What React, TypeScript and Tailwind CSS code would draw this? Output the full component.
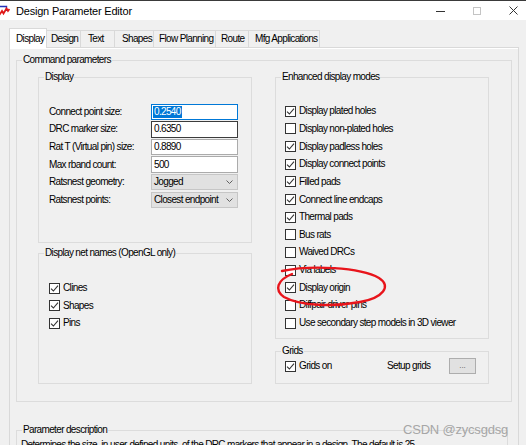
import type { ReactNode } from "react";

const ui =
  "font-['Liberation_Sans',Arial,sans-serif] text-[10px] tracking-[-0.65px] leading-[12px] text-black";

function GroupBox({
  label,
  className,
  children,
}: {
  label: string;
  className?: string;
  children?: ReactNode;
}) {
  return (
    <fieldset className={`border border-[#dcdcdc] ${className ?? ""}`}>
      <legend className="ml-[5px] px-[1px] leading-[12px]">{label}</legend>
      {children}
    </fieldset>
  );
}

function Check({ on }: { on?: boolean }) {
  return (
    <span className="flex h-[11px] w-[11px] shrink-0 items-center justify-center border border-[#333333] bg-white">
      {on && (
        <svg width="9" height="9" viewBox="0 0 9 9" fill="none">
          <path d="M1 4.6L3.4 7L8 1.6" stroke="#333333" strokeWidth="1.1" />
        </svg>
      )}
    </span>
  );
}

function CheckRow({ label, on, h = "h-[17.5px]" }: { label: string; on?: boolean; h?: string }) {
  return (
    <div className={`flex items-center gap-[3px] whitespace-nowrap ${h}`}>
      <Check on={on} />
      <span>{label}</span>
    </div>
  );
}

function Chevron() {
  return (
    <svg width="7" height="4" viewBox="0 0 7 4" fill="none">
      <path d="M0.5 0.5L3.5 3.5L6.5 0.5" stroke="#606060" strokeWidth="1" />
    </svg>
  );
}

const fields = [
  { label: "Connect point size:", value: "0.2540", kind: "focus" },
  { label: "DRC marker size:", value: "0.6350", kind: "hover" },
  { label: "Rat T (Virtual pin) size:", value: "0.8890", kind: "edit" },
  { label: "Max rband count:", value: "500", kind: "edit" },
  { label: "Ratsnest geometry:", value: "Jogged", kind: "combo" },
  { label: "Ratsnest points:", value: "Closest endpoint", kind: "combo" },
];

const modes: [string, boolean][] = [
  ["Display plated holes", true],
  ["Display non-plated holes", false],
  ["Display padless holes", true],
  ["Display connect points", true],
  ["Filled pads", true],
  ["Connect line endcaps", true],
  ["Thermal pads", true],
  ["Bus rats", false],
  ["Waived DRCs", false],
  ["Via labels", false],
  ["Display origin", true],
  ["Diffpair driver pins", false],
  ["Use secondary step models in 3D viewer", false],
];

function Field({ value, kind }: { value: string; kind: string }) {
  if (kind === "combo") {
    return (
      <div className="flex h-[16.5px] w-[87px] items-center justify-between border border-[#c6c6c6] bg-[#e1e1e1] pl-[2px] pr-[4px]">
        <span className="whitespace-nowrap">{value}</span>
        <Chevron />
      </div>
    );
  }
  const border =
    kind === "focus" ? "border-[#0078d7]" : kind === "hover" ? "border-[#3c3c3c]" : "border-[#ababab]";
  return (
    <div className={`flex h-[16.5px] w-[87px] items-center border bg-white pl-[1px] ${border}`}>
      {kind === "focus" ? (
        <span className="bg-[#0078d7] pl-[1px] pr-[1px] text-white">{value}</span>
      ) : (
        <span className="pl-[1px]">{value}</span>
      )}
    </div>
  );
}

function TitleBar() {
  return (
    <div className="flex h-[20px] items-center border-t border-[#3a3a3a] bg-white">
      <svg className="-ml-[2px] shrink-0" width="12" height="12" viewBox="0 0 12 12" fill="none">
        <path d="M0.5 1.5H8.5V6" stroke="#2233bb" strokeWidth="1.4" />
        <path d="M0.5 1.5V9" stroke="#2233bb" strokeWidth="1.4" />
        <path d="M1 10.5L4 6L5.5 8.5L8.5 3.5L10 6L11.5 4" stroke="#e01818" strokeWidth="1.8" />
      </svg>
      <span className="ml-[6px] text-[11px] tracking-[-0.2px] text-black">Design Parameter Editor</span>
      <div className="ml-auto flex items-center gap-[28px] pr-[8px]">
        <svg width="9" height="9" viewBox="0 0 9 9" fill="none">
          <path d="M0 5.5H9" stroke="#333333" strokeWidth="1" />
        </svg>
        <svg width="8" height="8" viewBox="0 0 8 8" fill="none">
          <rect x="0.5" y="0.5" width="7" height="7" stroke="#c4c4c4" strokeWidth="1" />
        </svg>
        <svg width="9" height="9" viewBox="0 0 9 9" fill="none">
          <path d="M0.5 0.5L8.5 8.5M8.5 0.5L0.5 8.5" stroke="#333333" strokeWidth="1" />
        </svg>
      </div>
    </div>
  );
}

const tabs = [
  { label: "Design", w: "w-[34px]", pl: "pl-[4px]" },
  { label: "Text", w: "w-[34px]", pl: "pl-[7px]" },
  { label: "Shapes", w: "w-[39px]", pl: "pl-[7px]" },
  { label: "Flow Planning", w: "w-[62px]", pl: "pl-[5px]" },
  { label: "Route", w: "w-[33px]", pl: "pl-[5px]" },
  { label: "Mfg Applications", w: "w-[71px]", pl: "pl-[6px]" },
];

function Tabs() {
  return (
    <div className="flex h-[27px] items-end pl-[9px]">
      <div className="relative z-10 -mb-px flex h-[20px] w-[38px] items-start border border-b-0 border-[#d9d9d9] bg-white pl-[6px] pt-[4px]">
        Display
      </div>
      {tabs.map((t) => (
        <div
          key={t.label}
          className={`flex h-[17px] items-center whitespace-nowrap border-t border-r border-[#d9d9d9] ${t.w} ${t.pl}`}
        >
          {t.label}
        </div>
      ))}
    </div>
  );
}

export default function App() {
  return (
    <div className={`relative h-[445px] w-[526px] overflow-hidden bg-[#f0f0f0] ${ui}`}>
      <TitleBar />
      <Tabs />
      <div className="ml-[9px] h-[400px] w-[510px] border border-[#d9d9d9] shadow-[inset_0_1px_0_#ffffff]">
        <GroupBox label="Command parameters" className="ml-[6px] mt-[6px] h-[348px] w-[496px]">
          <div className="ml-[21px] mt-[5px] flex gap-[23px]">
            <div className="flex w-[214px] flex-col gap-[4px]">
              <GroupBox label="Display" className="h-[172px] w-[214px]">
                <div className="flex flex-col pl-[10px] pt-[20px]">
                  {fields.map((f) => (
                    <div key={f.label} className="flex h-[17.6px] items-center">
                      <span className="w-[102px] whitespace-nowrap">{f.label}</span>
                      <Field value={f.value} kind={f.kind} />
                    </div>
                  ))}
                </div>
              </GroupBox>
              <GroupBox label="Display net names (OpenGL only)" className="h-[137px] w-[214px]">
                <div className="flex flex-col pl-[10px] pt-[20.5px]">
                  <CheckRow label="Clines" on />
                  <CheckRow label="Shapes" on />
                  <CheckRow label="Pins" on />
                </div>
              </GroupBox>
            </div>
            <div className="flex w-[214px] flex-col gap-[6px]">
              <GroupBox label="Enhanced display modes" className="h-[268px] w-[214px]">
                <div className="flex flex-col pl-[9px] pt-[19.5px]">
                  {modes.map(([label, on]) => (
                    <CheckRow key={label} label={label} on={on} h="h-[17.65px]" />
                  ))}
                </div>
              </GroupBox>
              <GroupBox label="Grids" className="h-[39px] w-[214px]">
                <div className="flex h-[17.5px] items-center pl-[9px] pt-[1px]">
                  <div className="w-[102px]">
                    <CheckRow label="Grids on" on />
                  </div>
                  <span className="w-[62px] whitespace-nowrap">Setup grids</span>
                  <div className="flex h-[16px] w-[27px] items-center justify-center border border-[#adadad] bg-[#e1e1e1] text-[8px] tracking-[0px] text-[#555555]">
                    ...
                  </div>
                </div>
              </GroupBox>
            </div>
          </div>
        </GroupBox>
        <GroupBox label="Parameter description" className="ml-[6px] mt-[22px] h-[60px] w-[492px]">
          <p className="ml-[4px] mt-[2.5px] whitespace-nowrap">
            Determines the size, in user-defined units, of the DRC markers that appear in a design. The default is 25.
          </p>
        </GroupBox>
      </div>

      <svg
        className="pointer-events-none absolute left-0 top-0"
        width="526"
        height="445"
        viewBox="0 0 526 445"
        fill="none"
      >
        <path
          d="M282 271C310 265 360 267 379 278C392 286 383 298 360 302C334 307 300 306 284 297C274 290 277 280 292 274"
          stroke="#e8141b"
          strokeWidth="2.4"
          strokeLinecap="round"
        />
      </svg>

      <span className="pointer-events-none absolute left-[403px] top-[422px] whitespace-nowrap text-[13px] leading-[15px] tracking-[-0.2px] text-[#a6a6a6]">
        CSDN @zycsgdsg
      </span>
    </div>
  );
}
